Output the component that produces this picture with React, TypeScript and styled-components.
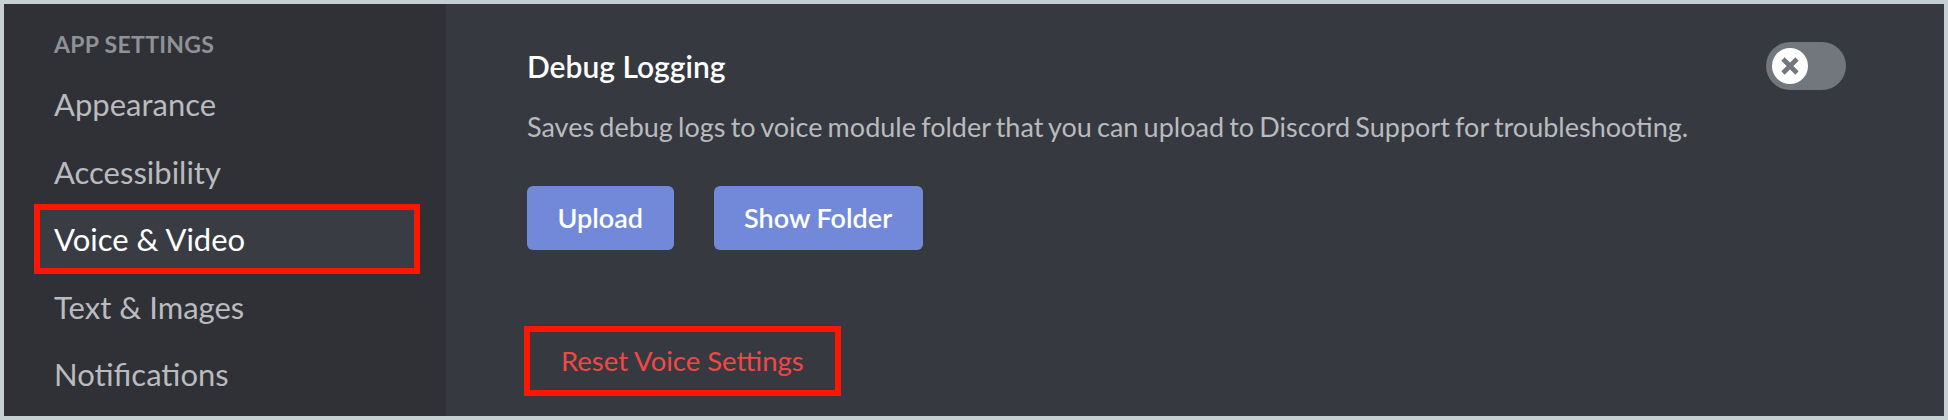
import styled, {createGlobalStyle} from "styled-components";

const GlobalStyle = createGlobalStyle`
  body {
    margin: 0;
    background: #c6d0d3;
  }
`;

const Frame = styled.div`
  display: flex;
  width: 1948px;
  height: 420px;
  box-sizing: border-box;
  border: 4px solid #c6d0d3;
  overflow: hidden;
  font-family: Lato, "Noto Sans", sans-serif;
`;

const Sidebar = styled.nav`
  flex-shrink: 0;
  width: 442px;
  box-sizing: border-box;
  padding: 27px 0 0 33px;
  background: #2f3136;
`;

const SidebarHeader = styled.div`
  padding-left: 17px;
  margin-bottom: 15px;
  font-size: 23px;
  font-weight: 700;
  line-height: 26px;
  letter-spacing: 0.3px;
  color: #8e9297;
  text-transform: uppercase;
`;

const NavItem = styled.div<{$selected?: boolean}>`
  width: 380px;
  height: 64px;
  box-sizing: border-box;
  margin-bottom: 3.6px;
  padding-left: 17px;
  font-size: 31px;
  line-height: 64px;
  color: ${props => props.$selected ? "#fff" : "#b9bbbe"};
  background: ${props => props.$selected ? "#393c43" : "transparent"};
  outline: ${props => props.$selected ? "6px solid #ff1600" : "none"};
  outline-offset: -3px;
`;

const Main = styled.main`
  flex: 1;
  box-sizing: border-box;
  padding: 37.5px 98px 0 81px;
  background: #36393f;
`;

const SettingRow = styled.div`
  display: flex;
  align-items: center;
  justify-content: space-between;
  height: 48px;
`;

const Title = styled.h3`
  margin: 0;
  font-size: 30px;
  font-weight: 600;
  line-height: 36px;
  color: #fff;
`;

const Track = styled.div`
  display: flex;
  align-items: center;
  width: 80px;
  height: 48px;
  box-sizing: border-box;
  padding-left: 6px;
  border-radius: 24px;
  background: #72767d;
`;

const Knob = styled.div`
  display: flex;
  width: 36px;
  height: 36px;
  border-radius: 50%;
  background: #fff;
`;

const Description = styled.p`
  margin: 20px 0 0;
  font-size: 27px;
  line-height: 33.6px;
  word-spacing: -1.7px;
  color: #b9bbbe;
`;

const ButtonRow = styled.div`
  display: flex;
  gap: 40px;
  margin-top: 42.9px;
`;

const Button = styled.button`
  height: 64px;
  padding: 0 30.5px;
  border: none;
  border-radius: 6px;
  background: #7289da;
  font-family: inherit;
  font-size: 27px;
  font-weight: 600;
  color: #fff;
`;

const ResetButton = styled.button`
  display: block;
  height: 64px;
  margin-top: 79px;
  padding: 0 34px;
  border: none;
  background: transparent;
  font-family: inherit;
  font-size: 27.5px;
  color: #f04747;
  outline: 6px solid #ff1600;
  outline-offset: -3px;
`;

const navItems = ["Appearance", "Accessibility", "Voice & Video", "Text & Images", "Notifications"];

function Toggle() {
    return (
        <Track>
            <Knob>
                <svg width="36" height="36" viewBox="0 0 36 36">
                    <path d="M11 11L25 25M25 11L11 25" stroke="#72767d" strokeWidth="4.6"/>
                </svg>
            </Knob>
        </Track>
    );
}

function App() {
    return (
        <>
            <GlobalStyle/>
            <Frame>
                <Sidebar>
                    <SidebarHeader>App Settings</SidebarHeader>
                    {navItems.map(item => (
                        <NavItem key={item} $selected={item === "Voice & Video"}>{item}</NavItem>
                    ))}
                </Sidebar>
                <Main>
                    <SettingRow>
                        <Title>Debug Logging</Title>
                        <Toggle/>
                    </SettingRow>
                    <Description>
                        Saves debug logs to voice module folder that you can upload to Discord Support for troubleshooting.
                    </Description>
                    <ButtonRow>
                        <Button>Upload</Button>
                        <Button>Show Folder</Button>
                    </ButtonRow>
                    <ResetButton>Reset Voice Settings</ResetButton>
                </Main>
            </Frame>
        </>
    );
}

export default App;
